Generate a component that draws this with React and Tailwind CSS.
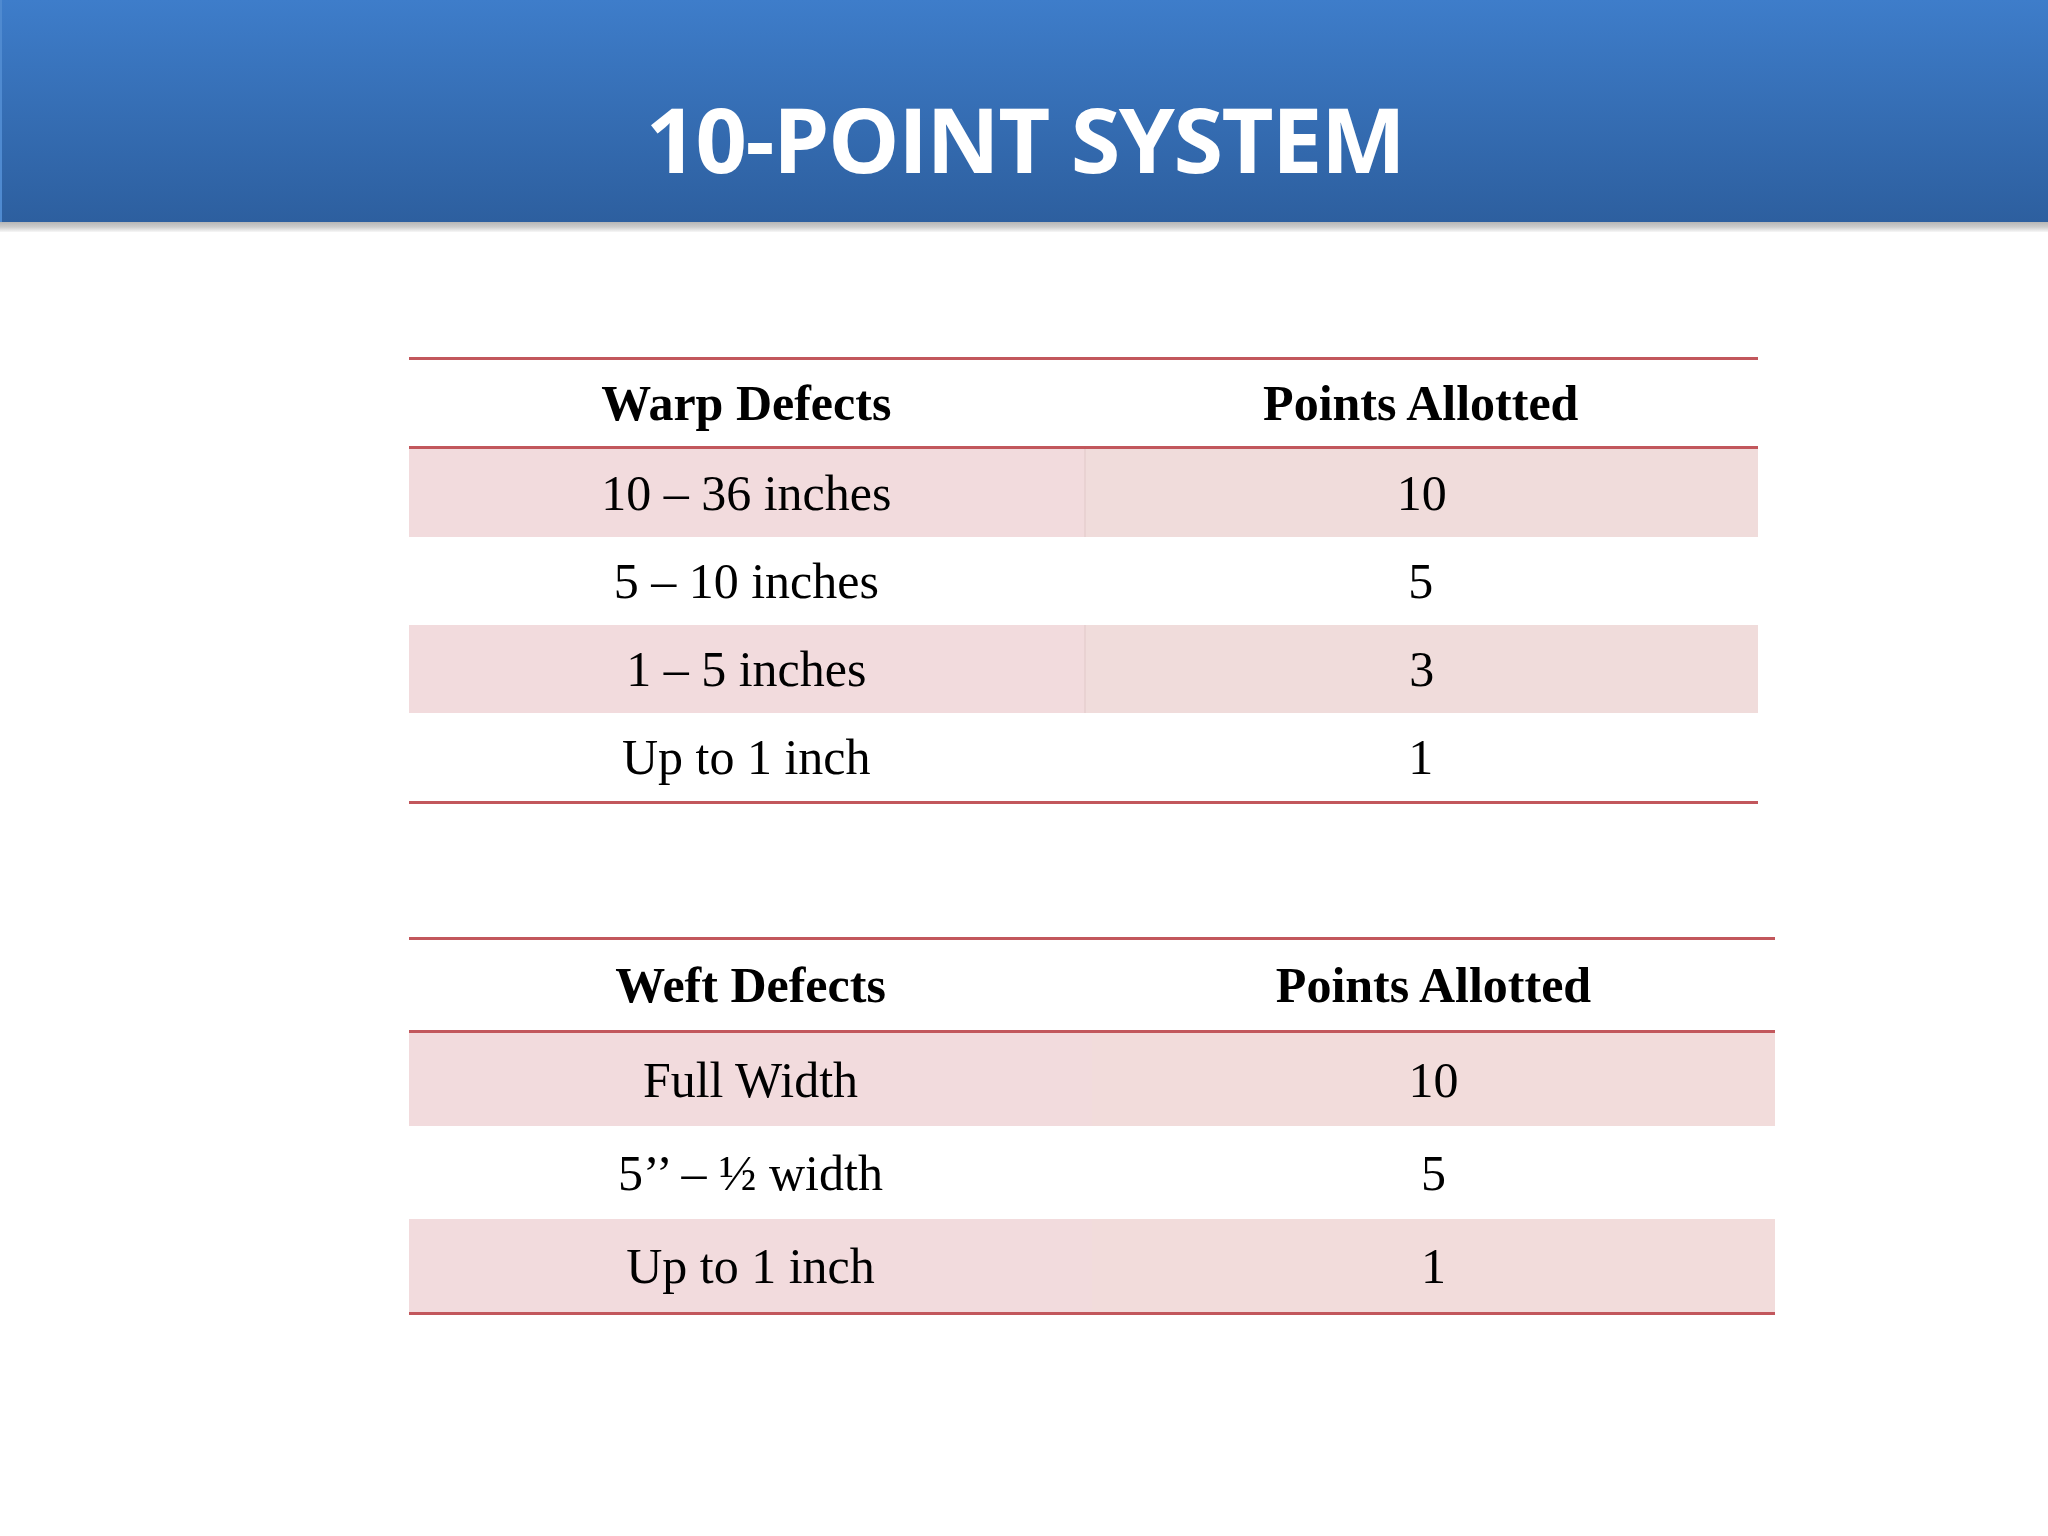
import React from "react";

const serif = { fontFamily: '"Liberation Serif", "Times New Roman", serif' };

function Table({ width, headerH, rowH, head, rows, split }) {
  return (
    <div className={`${width} border-t-[3px] border-b-[3px] border-[#c2575c]`} style={serif}>
      <div className={`grid grid-cols-2 ${headerH} border-b-[3px] border-[#c2575c] text-[50px] font-bold text-black leading-none`}>
        <div className="flex items-center justify-center">{head[0]}</div>
        <div className="flex items-center justify-center">{head[1]}</div>
      </div>
      {rows.map((r, i) => {
        const pink = i % 2 === 0;
        return (
          <div key={i} className={`grid grid-cols-2 ${rowH} text-[50px] text-black leading-none`}>
            <div className={`flex items-center justify-center ${pink ? "bg-[#f2dbdd]" : "bg-white"}`}>{r[0]}</div>
            <div
              className={`flex items-center justify-center ${
                pink ? (split ? "bg-[#f0dcdb] border-l-2 border-[#e9d2d2]" : "bg-[#f2dcdb]") : "bg-white"
              }`}
            >
              {r[1]}
            </div>
          </div>
        );
      })}
    </div>
  );
}

export default function App() {
  return (
    <div className="w-[2048px] h-[1536px] bg-white overflow-hidden">
      <div className="h-[222px] bg-gradient-to-b from-[#3e7dca] to-[#2d5f9f] border-l-2 border-[#4f8ad0]">
        <h1
          className="pt-[93px] text-center text-white font-bold text-[90px] leading-none tracking-[-1.5px]"
          style={{ fontFamily: '"Open Sans", "Liberation Sans", sans-serif' }}
        >
          10-POINT SYSTEM
        </h1>
      </div>
      <div className="h-[10px] bg-gradient-to-b from-[#b6b6b6] via-[#cdcdcd] to-[#f7f7f7]" />
      <div className="pl-[409px] pt-[125px] flex flex-col gap-[133px]">
        <Table
          width="w-[1349px]"
          headerH="h-[89px]"
          rowH="h-[88px]"
          head={["Warp Defects", "Points Allotted"]}
          rows={[
            ["10 – 36 inches", "10"],
            ["5 – 10 inches", "5"],
            ["1 – 5 inches", "3"],
            ["Up to 1 inch", "1"],
          ]}
          split
        />
        <Table
          width="w-[1366px]"
          headerH="h-[93px]"
          rowH="h-[93px]"
          head={["Weft Defects", "Points Allotted"]}
          rows={[
            ["Full Width", "10"],
            ["5’’ – ½ width", "5"],
            ["Up to 1 inch", "1"],
          ]}
        />
      </div>
    </div>
  );
}
